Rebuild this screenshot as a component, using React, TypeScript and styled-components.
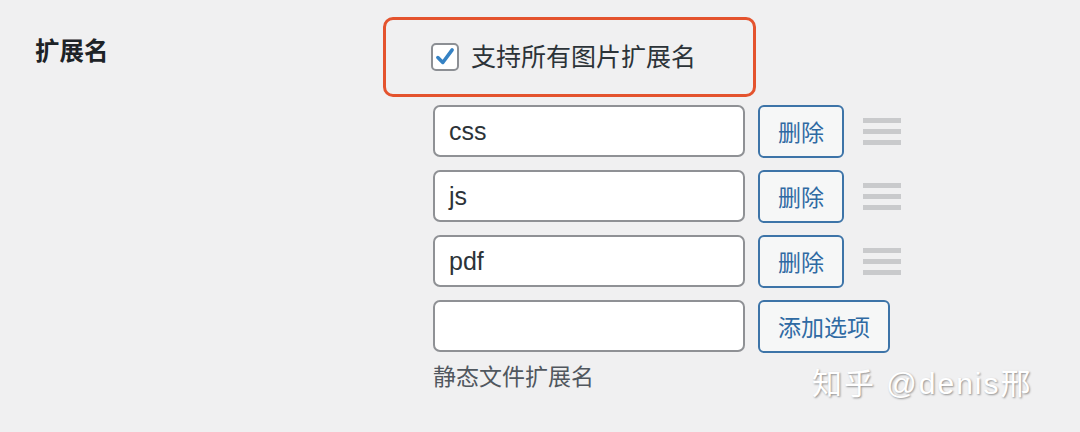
import styled, { createGlobalStyle } from "styled-components";

const GlobalStyle = createGlobalStyle`
	html, body {
		margin: 0;
		padding: 0;
		background: #f0f0f1;
	}
	body {
		width: 1080px;
		height: 432px;
		overflow: hidden;
		font-family: "Liberation Sans", "Noto Sans CJK SC", sans-serif;
		color: #1d2327;
	}
`;

const extensions = ["css", "js", "pdf"];

export default function App() {
	return (
		<>
			<GlobalStyle />
			<FieldRow>
				<Label>扩展名</Label>
				<Field>
					<Highlight>
						<Checkbox>
							<svg width="22" height="22" viewBox="0 0 20 20">
								<path
									d="M3.5 10.5 L8 15 L16.5 3.5"
									fill="none"
									stroke="#3582c4"
									strokeWidth="3.2"
									strokeLinecap="round"
									strokeLinejoin="round"
								/>
							</svg>
						</Checkbox>
						<CheckText>支持所有图片扩展名</CheckText>
					</Highlight>
					<List>
						{extensions.map((ext) => (
							<Row key={ext}>
								<Input>{ext}</Input>
								<Button>删除</Button>
								<Handle>
									<span />
									<span />
									<span />
								</Handle>
							</Row>
						))}
						<Row>
							<Input />
							<Button $wide>添加选项</Button>
						</Row>
						<Hint>静态文件扩展名</Hint>
					</List>
				</Field>
			</FieldRow>
			<Watermark>知乎 @denis邢</Watermark>
		</>
	);
}

const FieldRow = styled.div`
	display: grid;
	grid-template-columns: 348px 1fr;
	padding-left: 35px;
`;

const Label = styled.div`
	margin-top: 39px;
	font-size: 24.5px;
	font-weight: 700;
	line-height: 26px;
	color: #1d2327;
`;

const Field = styled.div`
	display: flex;
	flex-direction: column;
`;

const Highlight = styled.div`
	margin-top: 17px;
	box-sizing: border-box;
	width: 373px;
	height: 80px;
	border: 3px solid #e4532e;
	border-radius: 10px;
	padding-left: 45px;
	display: flex;
	align-items: center;
	gap: 12px;
`;

const Checkbox = styled.div`
	box-sizing: border-box;
	width: 28px;
	height: 28px;
	border: 2px solid #8c8f94;
	border-radius: 5px;
	background: #fff;
	display: flex;
	align-items: center;
	justify-content: center;
`;

const CheckText = styled.span`
	font-size: 25px;
	line-height: 28px;
	color: #2c3338;
`;

const List = styled.div`
	margin-top: 8px;
	margin-left: 50px;
	display: flex;
	flex-direction: column;
	gap: 13px;
`;

const Row = styled.div`
	display: flex;
	align-items: center;
	height: 52px;
`;

const Input = styled.div`
	box-sizing: border-box;
	width: 312px;
	height: 52px;
	border: 2px solid #8f9195;
	border-radius: 7px;
	background: #fff;
	padding-left: 14px;
	display: flex;
	align-items: center;
	font-size: 25px;
	color: #2c3338;
`;

const Button = styled.div<{ $wide?: boolean }>`
	box-sizing: border-box;
	margin-left: 13px;
	width: ${(p) => (p.$wide ? "132px" : "86px")};
	height: 53px;
	border: 2px solid #3d74a8;
	border-radius: 6px;
	background: #f6f7f7;
	color: #2f6aa3;
	font-size: 23px;
	display: flex;
	align-items: center;
	justify-content: center;
`;

const Handle = styled.div`
	margin-left: 19px;
	width: 38px;
	display: flex;
	flex-direction: column;
	gap: 6px;

	& span {
		display: block;
		height: 5px;
		background: #c9cacc;
	}
`;

const Hint = styled.div`
	margin-top: -2px;
	font-size: 23px;
	line-height: 28px;
	color: #50575e;
`;

const Watermark = styled.div`
	position: absolute;
	left: 812px;
	top: 366px;
	font-size: 30px;
	line-height: 36px;
	letter-spacing: 2px;
	color: #ffffff;
	text-shadow: 1px 1px 2px rgba(0, 0, 0, 0.4);
	white-space: nowrap;
`;
